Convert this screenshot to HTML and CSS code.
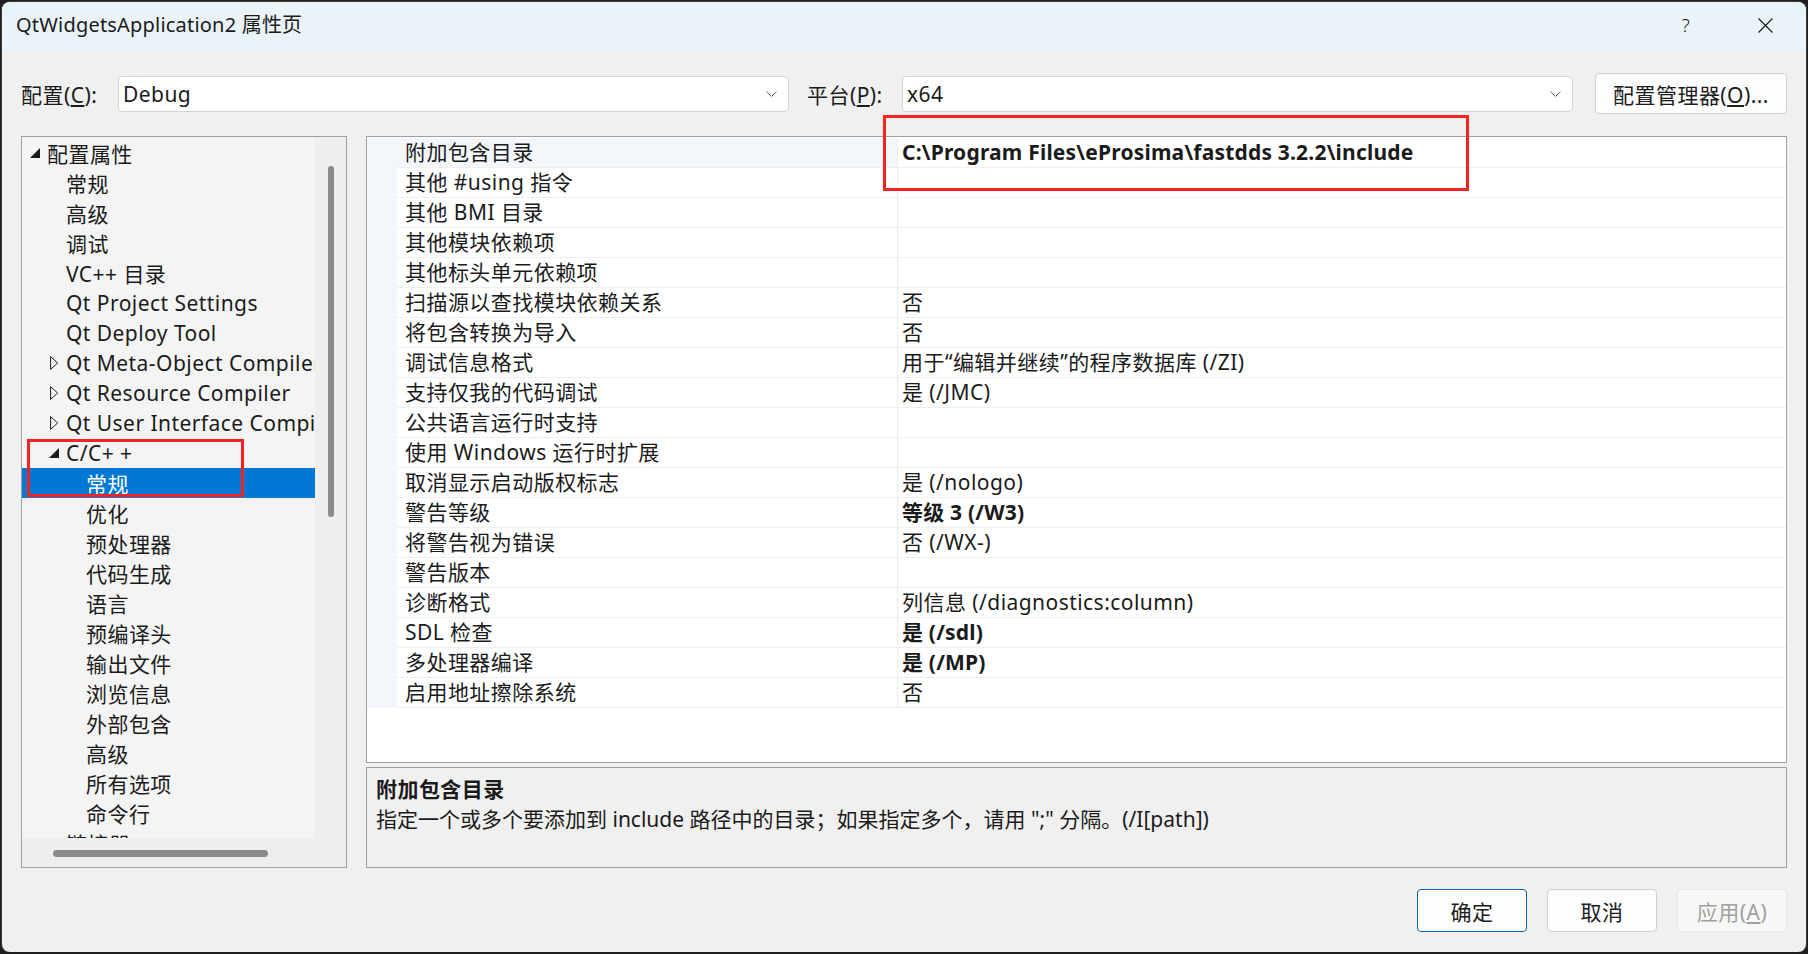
FILE: index.html
```html
<!DOCTYPE html>
<html lang="zh-CN">
<head>
    <meta charset="UTF-8">
    <title>QtWidgetsApplication2 属性页</title>
    <link rel="stylesheet" href="styles.css">
</head>
<body>
    <div class="window">
        <div class="titlebar">
            <span class="titlebar__text">QtWidgetsApplication2 属性页</span>
            <span class="titlebar__help">?</span>
            <span class="titlebar__close">
                <svg width="15" height="15" viewBox="0 0 15 15"><path d="M0.5 0.5 L14.5 14.5 M14.5 0.5 L0.5 14.5" stroke="#1b1b1b" stroke-width="1.2" fill="none"/></svg>
            </span>
        </div>

        <div class="content">
            <div class="toolbar">
                <span class="toolbar__label">配置(<u>C</u>):</span>
                <div class="combo">
                    <span class="combo__text">Debug</span>
                    <svg class="combo__chevron" width="11" height="6" viewBox="0 0 11 6"><path d="M0.5 0.5 L5.5 5.5 L10.5 0.5" stroke="#606060" stroke-width="1" fill="none"/></svg>
                </div>
                <span class="toolbar__label toolbar__label--platform">平台(<u>P</u>):</span>
                <div class="combo">
                    <span class="combo__text">x64</span>
                    <svg class="combo__chevron" width="11" height="6" viewBox="0 0 11 6"><path d="M0.5 0.5 L5.5 5.5 L10.5 0.5" stroke="#606060" stroke-width="1" fill="none"/></svg>
                </div>
                <button class="btn btn--manager">配置管理器(<u>O</u>)...</button>
            </div>

            <div class="main">
                <div class="tree-panel">
                    <div class="tree-view">
                        <ul class="tree">
                            <li class="tree__item lvl0"><span class="exp"><svg width="10" height="10" viewBox="0 0 10 10"><polygon points="10,0 10,10 0,10" fill="#1b1b1b"/></svg></span>配置属性</li>
                            <li class="tree__item lvl1"><span class="exp"></span>常规</li>
                            <li class="tree__item lvl1"><span class="exp"></span>高级</li>
                            <li class="tree__item lvl1"><span class="exp"></span>调试</li>
                            <li class="tree__item lvl1"><span class="exp"></span>VC++ 目录</li>
                            <li class="tree__item lvl1"><span class="exp"></span>Qt Project Settings</li>
                            <li class="tree__item lvl1"><span class="exp"></span>Qt Deploy Tool</li>
                            <li class="tree__item lvl1"><span class="exp exp--closed"><svg width="9" height="14" viewBox="0 0 9 14"><polygon points="0.6,0.6 7.6,7 0.6,13.4" fill="none" stroke="#1b1b1b" stroke-width="1"/></svg></span>Qt Meta-Object Compiler</li>
                            <li class="tree__item lvl1"><span class="exp exp--closed"><svg width="9" height="14" viewBox="0 0 9 14"><polygon points="0.6,0.6 7.6,7 0.6,13.4" fill="none" stroke="#1b1b1b" stroke-width="1"/></svg></span>Qt Resource Compiler</li>
                            <li class="tree__item lvl1"><span class="exp exp--closed"><svg width="9" height="14" viewBox="0 0 9 14"><polygon points="0.6,0.6 7.6,7 0.6,13.4" fill="none" stroke="#1b1b1b" stroke-width="1"/></svg></span>Qt User Interface Compiler</li>
                            <li class="tree__item lvl1"><span class="exp"><svg width="10" height="10" viewBox="0 0 10 10"><polygon points="10,0 10,10 0,10" fill="#1b1b1b"/></svg></span>C/C+ +</li>
                            <li class="tree__item lvl2 is-selected"><span class="exp"></span>常规</li>
                            <li class="tree__item lvl2"><span class="exp"></span>优化</li>
                            <li class="tree__item lvl2"><span class="exp"></span>预处理器</li>
                            <li class="tree__item lvl2"><span class="exp"></span>代码生成</li>
                            <li class="tree__item lvl2"><span class="exp"></span>语言</li>
                            <li class="tree__item lvl2"><span class="exp"></span>预编译头</li>
                            <li class="tree__item lvl2"><span class="exp"></span>输出文件</li>
                            <li class="tree__item lvl2"><span class="exp"></span>浏览信息</li>
                            <li class="tree__item lvl2"><span class="exp"></span>外部包含</li>
                            <li class="tree__item lvl2"><span class="exp"></span>高级</li>
                            <li class="tree__item lvl2"><span class="exp"></span>所有选项</li>
                            <li class="tree__item lvl2"><span class="exp"></span>命令行</li>
                            <li class="tree__item lvl1"><span class="exp"><svg width="10" height="10" viewBox="0 0 10 10"><polygon points="10,0 10,10 0,10" fill="#1b1b1b"/></svg></span>链接器</li>
                        </ul>
                        <div class="vscroll"><div class="vscroll__thumb"></div></div>
                    </div>
                    <div class="hscroll"><div class="hscroll__thumb"></div></div>
                    <div class="mark mark--tree"></div>
                </div>

                <div class="right">
                    <div class="grid-panel">
                        <div class="row is-selected"><span class="row__gutter"></span><span class="row__name">附加包含目录</span><span class="row__value bold">C:\Program Files\eProsima\fastdds 3.2.2\include</span></div>
                        <div class="row"><span class="row__gutter"></span><span class="row__name">其他 #using 指令</span><span class="row__value"></span></div>
                        <div class="row"><span class="row__gutter"></span><span class="row__name">其他 BMI 目录</span><span class="row__value"></span></div>
                        <div class="row"><span class="row__gutter"></span><span class="row__name">其他模块依赖项</span><span class="row__value"></span></div>
                        <div class="row"><span class="row__gutter"></span><span class="row__name">其他标头单元依赖项</span><span class="row__value"></span></div>
                        <div class="row"><span class="row__gutter"></span><span class="row__name">扫描源以查找模块依赖关系</span><span class="row__value">否</span></div>
                        <div class="row"><span class="row__gutter"></span><span class="row__name">将包含转换为导入</span><span class="row__value">否</span></div>
                        <div class="row"><span class="row__gutter"></span><span class="row__name">调试信息格式</span><span class="row__value">用于“编辑并继续”的程序数据库 (/ZI)</span></div>
                        <div class="row"><span class="row__gutter"></span><span class="row__name">支持仅我的代码调试</span><span class="row__value">是 (/JMC)</span></div>
                        <div class="row"><span class="row__gutter"></span><span class="row__name">公共语言运行时支持</span><span class="row__value"></span></div>
                        <div class="row"><span class="row__gutter"></span><span class="row__name">使用 Windows 运行时扩展</span><span class="row__value"></span></div>
                        <div class="row"><span class="row__gutter"></span><span class="row__name">取消显示启动版权标志</span><span class="row__value">是 (/nologo)</span></div>
                        <div class="row"><span class="row__gutter"></span><span class="row__name">警告等级</span><span class="row__value bold">等级 3 (/W3)</span></div>
                        <div class="row"><span class="row__gutter"></span><span class="row__name">将警告视为错误</span><span class="row__value">否 (/WX-)</span></div>
                        <div class="row"><span class="row__gutter"></span><span class="row__name">警告版本</span><span class="row__value"></span></div>
                        <div class="row"><span class="row__gutter"></span><span class="row__name">诊断格式</span><span class="row__value">列信息 (/diagnostics:column)</span></div>
                        <div class="row"><span class="row__gutter"></span><span class="row__name">SDL 检查</span><span class="row__value bold">是 (/sdl)</span></div>
                        <div class="row"><span class="row__gutter"></span><span class="row__name">多处理器编译</span><span class="row__value bold">是 (/MP)</span></div>
                        <div class="row"><span class="row__gutter"></span><span class="row__name">启用地址擦除系统</span><span class="row__value">否</span></div>
                        <div class="mark mark--grid"></div>
                    </div>
                    <div class="desc-panel">
                        <div class="desc-panel__title">附加包含目录</div>
                        <div class="desc-panel__text">指定一个或多个要添加到 include 路径中的目录；如果指定多个，请用 ";" 分隔。(/I[path])</div>
                    </div>
                </div>
            </div>

            <div class="buttons">
                <button class="btn btn--dialog btn--default">确定</button>
                <button class="btn btn--dialog">取消</button>
                <button class="btn btn--dialog btn--disabled">应用(<u>A</u>)</button>
            </div>
        </div>
    </div>
</body>
</html>
```

FILE: styles.css
```css
* {
    box-sizing: border-box;
}

body {
    margin: 0;
    background: #1f1f1f;
    font-family: "Noto Sans", "Noto Sans CJK SC", sans-serif;
    font-size: 21px;
    letter-spacing: 0.45px;
    color: #1b1b1b;
    overflow: hidden;
}

.window {
    width: 1804px;
    height: 950px;
    margin: 2px 0 0 2px;
    background: #f0f0f0;
    border-radius: 8px;
    box-shadow: 0 0 0 1px #3c3c3c;
    overflow: hidden;
}

/* title bar */
.titlebar {
    height: 51px;
    background: #eaf3f7;
    display: flex;
    align-items: flex-start;
}

.titlebar__text {
    flex: 1;
    padding: 11px 0 0 14px;
    font-size: 20px;
    line-height: 24px;
    letter-spacing: 0.2px;
}

.titlebar__help,
.titlebar__close {
    height: 46px;
    display: flex;
    align-items: center;
    justify-content: center;
}

.titlebar__help {
    width: 76px;
    font-size: 19px;
    font-weight: 300;
}

.titlebar__close {
    width: 82px;
}

.content {
    padding: 20px 19px 0;
}

/* config / platform row */
.toolbar {
    display: flex;
    align-items: center;
    height: 41px;
}

.toolbar__label {
    width: 97px;
    white-space: nowrap;
}

.toolbar__label--platform {
    width: 95px;
    margin-left: 18px;
}

.combo {
    width: 671px;
    height: 36px;
    background: #fff;
    border: 1px solid #d3d3d3;
    border-radius: 4px;
    display: flex;
    align-items: center;
    padding: 0 11px 0 4px;
}

.combo__text {
    flex: 1;
}

.btn {
    font: inherit;
    letter-spacing: inherit;
    color: #1b1b1b;
    background: #fdfdfd;
    border: 1px solid #d0d0d0;
    border-radius: 4px;
    padding: 0;
}

.btn--manager {
    width: 192px;
    height: 41px;
    margin-left: 22px;
}

/* main area */
.main {
    display: flex;
    gap: 19px;
    margin-top: 22px;
}

.tree-panel {
    position: relative;
    width: 326px;
    height: 732px;
    border: 1px solid #a0a0a0;
    background: #f4f4f4;
    display: flex;
    flex-direction: column;
}

.tree-view {
    height: 701px;
    display: flex;
}

.tree {
    list-style: none;
    margin: 0;
    padding: 1px 0 0;
    width: 293px;
    overflow: hidden;
}

.tree__item {
    height: 30px;
    display: flex;
    align-items: center;
    white-space: nowrap;
}

.tree__item.lvl0 { padding-left: 8px; }
.tree__item.lvl1 { padding-left: 27px; }
.tree__item.lvl2 { padding-left: 47px; }

.tree__item.is-selected {
    background: #0078d4;
    color: #fff;
}

.exp {
    width: 17px;
    flex: none;
    display: flex;
    align-items: center;
}

.exp--closed svg {
    margin-left: 1px;
}

.vscroll {
    flex: 1;
    background: #eeeeee;
}

.vscroll__thumb {
    width: 6px;
    height: 351px;
    margin: 29px 0 0 13px;
    border-radius: 3px;
    background: #8a8a8a;
}

.hscroll {
    flex: 1;
    background: #eeeeee;
    padding: 12px 0 0 31px;
}

.hscroll__thumb {
    width: 215px;
    height: 7px;
    border-radius: 4px;
    background: #8a8a8a;
}

.right {
    flex: 1;
    display: flex;
    flex-direction: column;
    gap: 4px;
}

/* property grid */
.grid-panel {
    position: relative;
    height: 627px;
    border: 1px solid #a0a0a0;
    background: #fff;
    padding-top: 1px;
}

.row {
    display: flex;
    height: 30px;
    line-height: 29px;
    white-space: nowrap;
}

.row__gutter {
    width: 30px;
    background: #f3f6fa;
}

.row__name {
    width: 501px;
    padding-left: 8px;
    border-right: 1px solid #ededed;
    border-bottom: 1px solid #efefef;
}

.row.is-selected .row__name {
    background: #f3f6fa;
}

.row__value {
    flex: 1;
    padding-left: 4px;
    border-bottom: 1px solid #efefef;
}

.bold {
    font-weight: 700;
    letter-spacing: 0.2px;
}

.desc-panel {
    height: 101px;
    border: 1px solid #a0a0a0;
    background: #f0f0f0;
    padding: 6px 9px 0;
    line-height: 30px;
}

.desc-panel__title {
    font-weight: 700;
}

.desc-panel__text {
    letter-spacing: 0;
}

/* annotation boxes */
.mark {
    position: absolute;
    border: 3px solid #f52222;
}

.mark--tree {
    left: 5px;
    top: 302px;
    width: 217px;
    height: 58px;
}

.mark--grid {
    left: 516px;
    top: -22px;
    width: 586px;
    height: 76px;
}

/* dialog buttons */
.buttons {
    display: flex;
    justify-content: flex-end;
    gap: 20px;
    margin-top: 21px;
}

.btn--dialog {
    width: 110px;
    height: 43px;
}

.btn--default {
    border-color: #0067c0;
}

.btn--disabled {
    color: #a0a0a0;
    background: #f7f7f7;
    border-color: #e8e8e8;
}
```
